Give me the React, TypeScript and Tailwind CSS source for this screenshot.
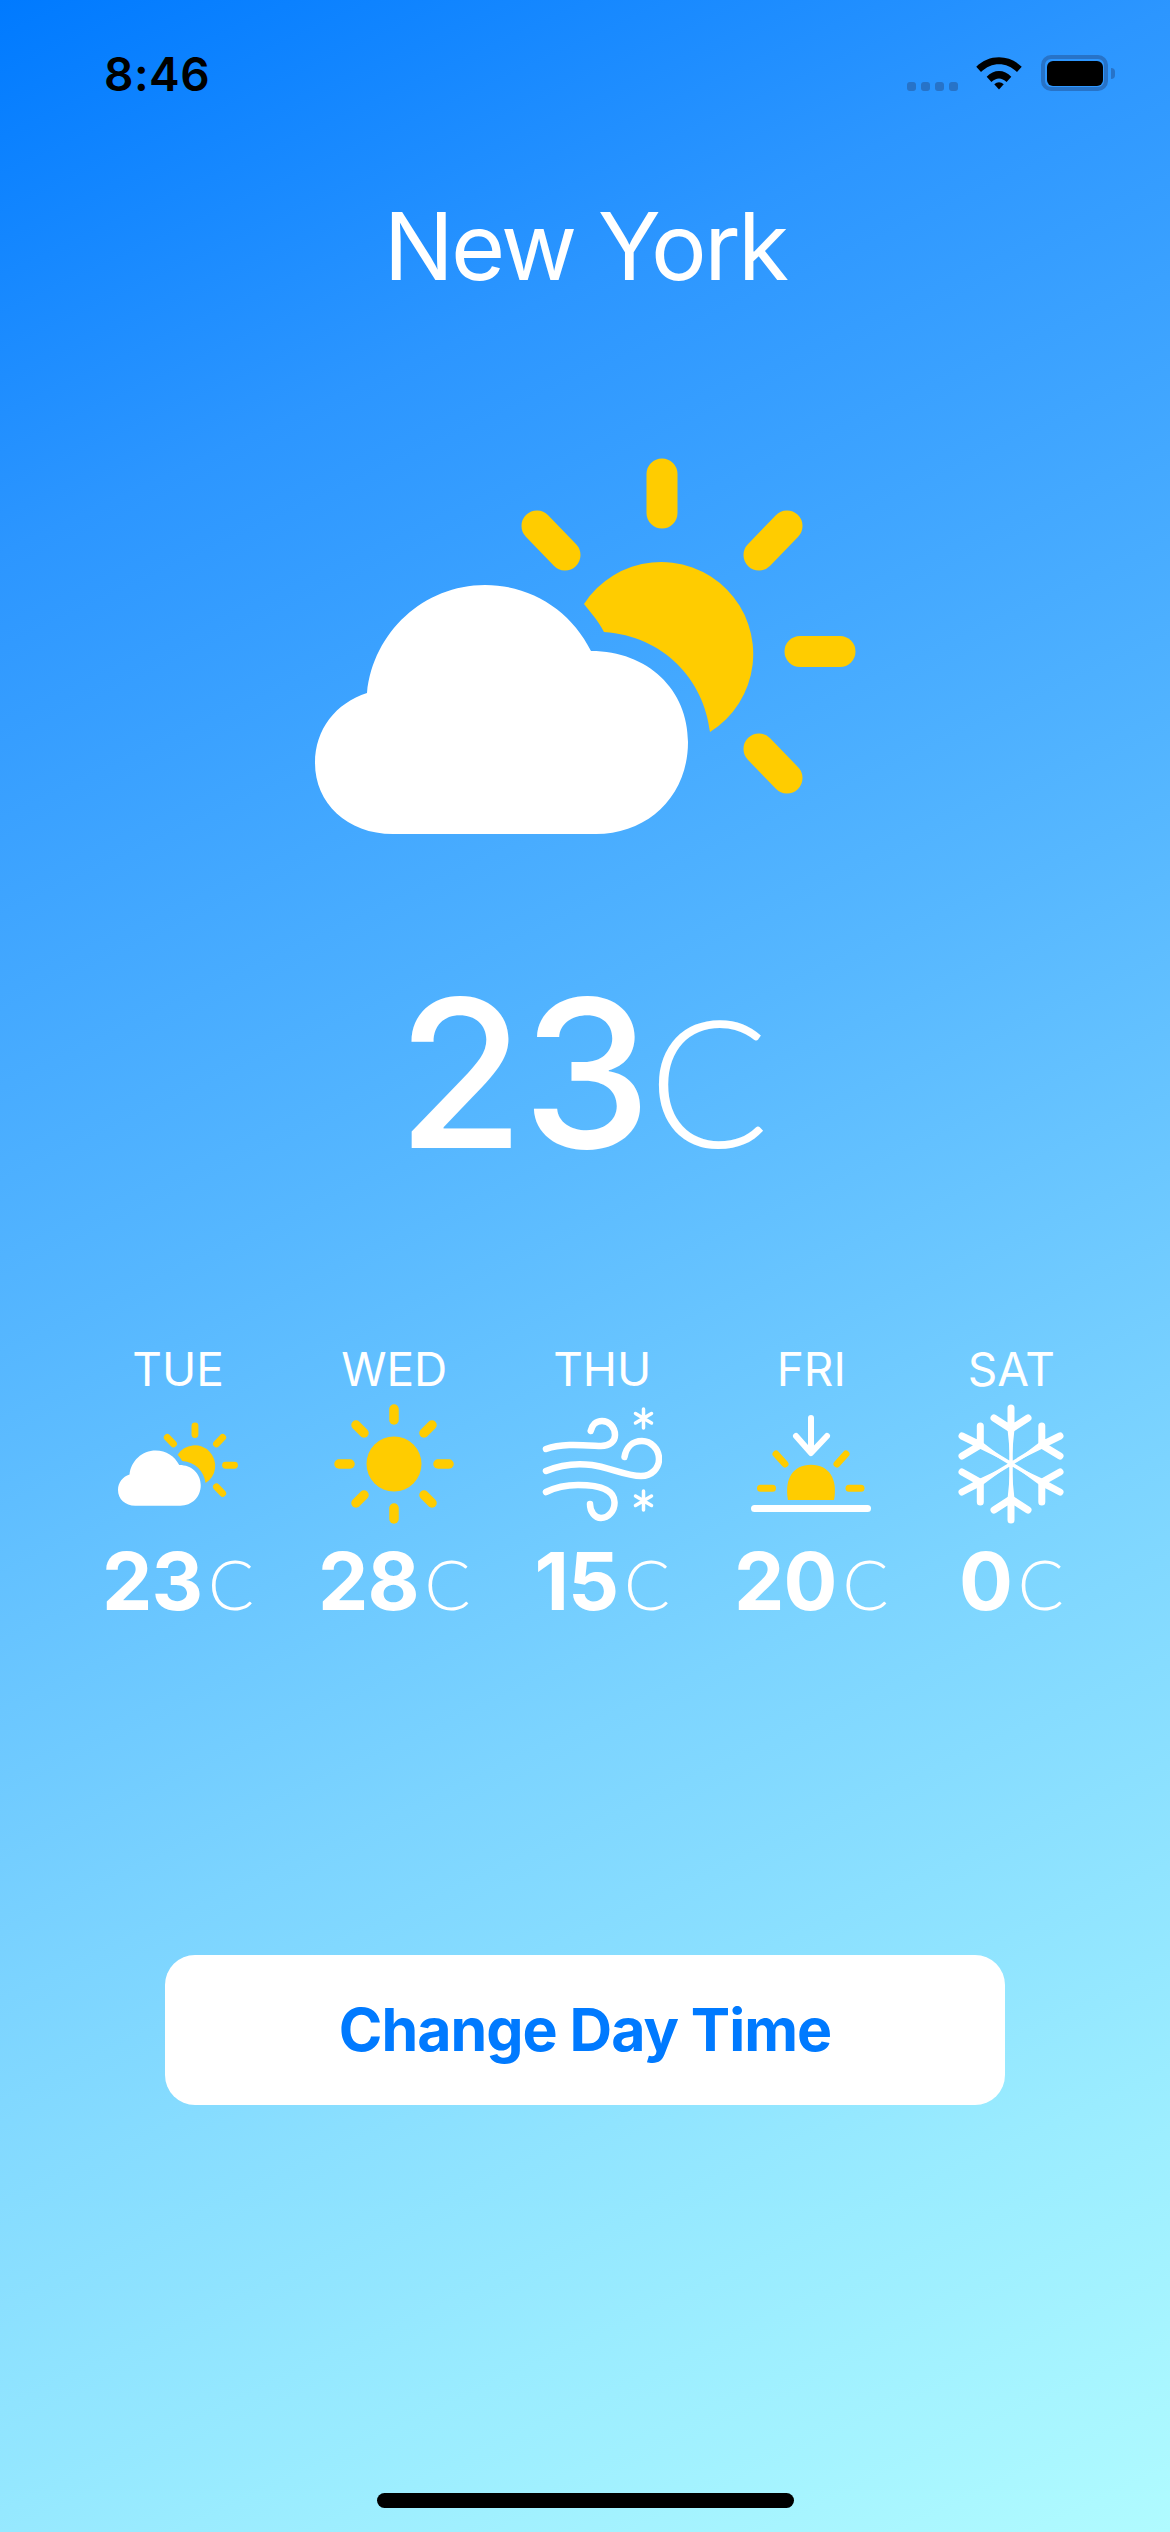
import React from 'react';

const FONT = "font-['Inter','Liberation_Sans',sans-serif]";

const CloudSun: React.FC<{ className?: string }> = ({ className }) => (
  <svg viewBox="315 458 541 376" className={className}>
    <g stroke="#ffcc00" strokeWidth="31" strokeLinecap="round">
      <path d="M662 474V513" />
      <path d="M537 526L565 555" />
      <path d="M787 526L759 555" />
      <path d="M800 651.5H840" />
      <path d="M759 749L787 778" />
    </g>
    <path
      d="M584 604C590 612 598 620 604 632C664 636 704 680 710 732A92 92 0 1 0 584 604Z"
      fill="#ffcc00"
    />
    <path
      d="M367 693C373 632 424 585 485 585C532 585 571 611 591 651C648 651 688 690 688 742C688 796 648 834 596 834H393C347 834 315 803 315 763C315 729 336 703 367 693Z"
      fill="#fff"
    />
  </svg>
);

const Sun: React.FC = () => (
  <svg viewBox="-60 -60 120 120" className="w-[120px] h-[120px]">
    <circle cx="0" cy="0" r="27.5" fill="#ffcc00" />
    <g stroke="#ffcc00" strokeWidth="9.5" strokeLinecap="round">
      <path d="M0 -55V-44" />
      <path d="M0 55V44" />
      <path d="M-55 0H-44" />
      <path d="M55 0H44" />
      <path d="M-38 -39L-30 -31" />
      <path d="M38 -39L30 -31" />
      <path d="M-38 39L-30 31" />
      <path d="M38 39L30 31" />
    </g>
  </svg>
);

const Wind: React.FC = () => (
  <svg viewBox="0 0 120 120" className="w-[120px] h-[120px]" fill="none" stroke="#fff" strokeLinecap="round">
    <g strokeWidth="6.5">
      <path d="M4 45C20 39 40 41 59 42C68 42 73 37 73 31C73 23 67 17 60 17C54 17 50 21 48.7 27" />
      <path d="M4 67C18 61 34 59 50 61C66 63 84 72 99 72C110 72 117 64 117 55C117 45 109 37 100 37C90 37 84 44 82.5 53" />
      <path d="M4 88C14 83 24 81 36 81C56 81 72 85 72.5 98C73 107 66 114 59 114C53 114 48 108 48 100" />
    </g>
    <g strokeWidth="3.5">
      <path d="M101.5 5V24M93.5 9.5L109.5 19M109.5 9.5L93.5 19" />
      <path d="M101.5 87V106M93.5 92L109.5 101.5M109.5 92L93.5 101.5" />
    </g>
  </svg>
);

const Sunset: React.FC = () => (
  <svg viewBox="0 0 120 120" className="w-[120px] h-[120px]" fill="none" strokeLinecap="round" strokeLinejoin="round">
    <path d="M60 14V48M45 32L60 49L76 32" stroke="#fff" strokeWidth="6" />
    <path d="M3.5 104.5H116.5" stroke="#fff" strokeWidth="7" />
    <path d="M37 96C33 75 42 60.7 60 60.7C78 60.7 87 75 83 96Z" fill="#ffcc00" />
    <g stroke="#ffcc00" strokeWidth="7">
      <path d="M25 50L34 60" />
      <path d="M95 50L86 60" />
      <path d="M9.5 84.3H21.5" />
      <path d="M98 84.3H110" />
    </g>
  </svg>
);

const Snow: React.FC = () => (
  <svg viewBox="0 0 106 120" className="w-[106px] h-[120px]" fill="none" stroke="#fff" strokeLinecap="round" strokeLinejoin="round">
    <g strokeWidth="7">
      <path d="M53 4V25M36 14L53 25L70 14" />
      <path d="M53 116V95M36 106L53 95L70 106" />
      <path d="M4 32L22.3 41M22.3 22V41L4 52" />
      <path d="M102 32L83.8 41M83.8 22V41L102 52" />
      <path d="M4 88L22.3 78.3M22.3 98V78.3L4 68" />
      <path d="M102 88L83.8 78.3M83.8 98V78.3L102 68" />
    </g>
    <path d="M53 25V95M22.3 41L83.8 78.3M83.8 41L22.3 78.3" strokeWidth="3.5" />
    <path
      d="M49.5 25H56.5L53 60ZM49.5 95H56.5L53 60ZM20.4 44L24.2 38L53 60ZM85.7 44L81.9 38L53 60ZM20.4 75.3L24.2 81.3L53 60ZM85.7 75.3L81.9 81.3L53 60Z"
      fill="#fff"
      stroke="none"
    />
  </svg>
);

const forecast = [
  { day: 'TUE', temp: '23', icon: <CloudSun className="w-[120px] h-[84px]" /> },
  { day: 'WED', temp: '28', icon: <Sun /> },
  { day: 'THU', temp: '15', icon: <Wind /> },
  { day: 'FRI', temp: '20', icon: <Sunset /> },
  { day: 'SAT', temp: '0', icon: <Snow /> },
];

export default function App() {
  return (
    <div className={`${FONT} relative flex h-[2532px] w-[1170px] flex-col overflow-hidden bg-[linear-gradient(155deg,#007aff_0%,#2c96ff_18%,#56b7ff_44%,#7cd4ff_65%,#9aecff_85%,#b0fbff_100%)] text-white`}>
      <div className="flex h-[150px] items-start justify-between pl-[104px] pr-[55px] pt-[44px]">
        <span className="text-[46px] leading-[60px] font-semibold tracking-[0.5px] text-black">8:46</span>
        <div className="mt-[11px] flex items-start">
          <div className="mt-[27px] flex gap-[5px]">
            <span className="h-[9px] w-[9px] rounded-[3px] bg-[#2773c8]" />
            <span className="h-[9px] w-[9px] rounded-[3px] bg-[#2773c8]" />
            <span className="h-[9px] w-[9px] rounded-[3px] bg-[#2773c8]" />
            <span className="h-[9px] w-[9px] rounded-[3px] bg-[#2773c8]" />
          </div>
          <svg viewBox="0 0 50 38" className="ml-[17px] h-[36px] w-[48px]">
            <path d="M1 12.5C14 -1 36 -1 49 12.5L44 18C33 7 17 7 6 18Z" />
            <path d="M12 23C19.5 15 30.5 15 38 23L33 28.5C28 23.5 22 23.5 17 28.5Z" />
            <path d="M20 31C23 28 27 28 30 31L25 36.5Z" />
          </svg>
          <div className="ml-[18px] flex items-center">
            <div className="h-[36px] w-[67px] rounded-[10px] border-[4px] border-[#2773c8] p-[1.5px]">
              <div className="h-full w-full rounded-[6px] bg-black" />
            </div>
            <div className="ml-[3px] h-[11px] w-[4px] rounded-r-full bg-[#2773c8]" />
          </div>
        </div>
      </div>

      <h1 className="mt-[40px] text-center text-[93px] leading-[112px] font-normal tracking-[-2.7px]">New York</h1>

      <div className="mt-[156px] flex justify-center">
        <CloudSun className="ml-[1px] h-[376px] w-[541px]" />
      </div>

      <div className="mt-[119px] flex items-baseline justify-center pr-[4px] leading-none">
        <span className="text-[206px] font-medium leading-[240px] tracking-[-2px]">23</span>
        <span className="ml-[-1px] font-['Lato',sans-serif] text-[178px] font-light leading-[240px]">C</span>
      </div>

      <div className="mt-[142px] flex gap-[64px] pl-[102px]">
        {forecast.map((f) => (
          <div key={f.day} className="flex flex-col items-center last:ml-[6px]">
            <span className="text-[46px] leading-[56px]">{f.day}</span>
            <div className="mt-[7px] flex h-[120px] items-center justify-center">{f.icon}</div>
            <div className="mt-[17px] flex items-baseline leading-[80px]">
              <span className="text-[80px] font-bold tracking-[-1px]">{f.temp}</span>
              <span className="ml-[6px] font-['Lato',sans-serif] text-[68px] font-light">C</span>
            </div>
          </div>
        ))}
      </div>

      <div className="mt-[331px] flex justify-center">
        <button className="h-[150px] w-[840px] rounded-[30px] bg-white text-[59px] font-bold tracking-[-1px] text-[#007aff]">
          Change Day Time
        </button>
      </div>

      <div className="absolute bottom-[24px] left-[377px] h-[15px] w-[417px] rounded-full bg-black" />
    </div>
  );
}
